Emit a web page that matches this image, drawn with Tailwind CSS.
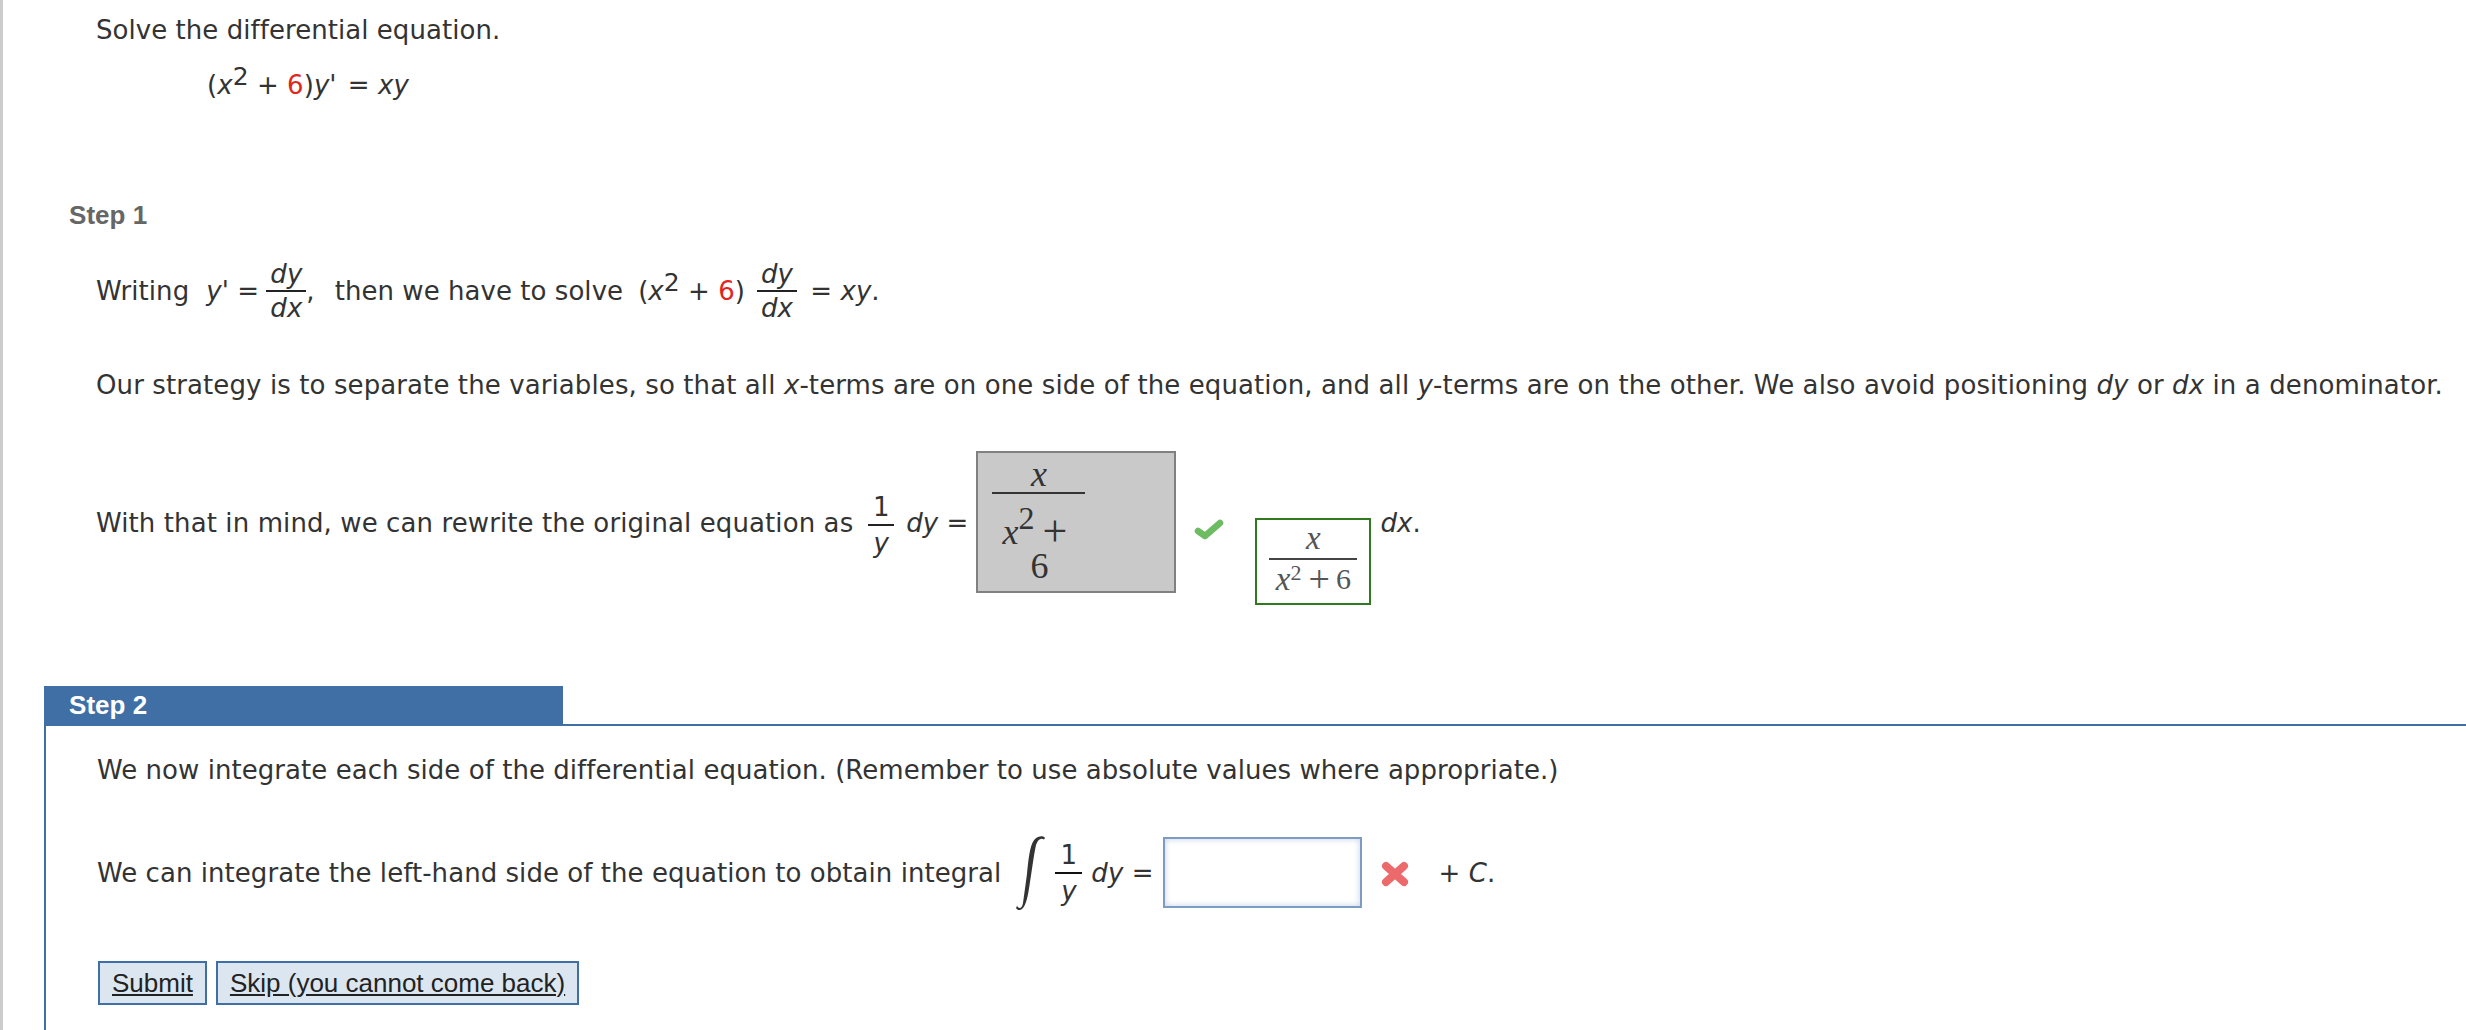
<!DOCTYPE html>
<html><head><meta charset="utf-8"><title>Step</title>
<script src="https://cdn.jsdelivr.net/npm/@tailwindcss/browser@4"></script></head>
<body class="bg-white">
<div class="w-[2466px] h-[1030px] overflow-hidden flex text-[#333] text-[26px] tracking-[0.05px] font-['DejaVu_Sans',sans-serif]">
  <div class="w-[3px] bg-[#cccccc] shrink-0"></div>
  <div class="flex-1 flex flex-col min-w-0 whitespace-nowrap">
    <div class="h-[60px] flex items-center pl-[93px]">Solve the differential equation.</div>
    <div class="h-[50px] flex items-center pl-[204px]"><span>(<i>x</i><sup class="text-[25px] relative top-[-9px] align-baseline">2</sup>&nbsp;+&nbsp;<span class="text-[#e1261c]">6</span>)<i>y'</i><span class="ml-[3px]">&nbsp;=&nbsp;</span><i>xy</i></span></div>
    <div class="h-[40px] mt-[85px] flex items-center pl-[66px] font-bold text-[#666] font-['Liberation_Sans',sans-serif]">Step 1</div>
    <div class="h-[76px] mt-[18px] flex items-center pl-[93px]">
      <span>Writing</span><span class="ml-[17px]"><i>y'</i>&nbsp;=&nbsp;</span>
      <span class="inline-flex flex-col items-center w-[40px] ml-[-1px]"><i class="leading-[32px]">dy</i><span class="w-full h-[2px] bg-[#222]"></span><i class="leading-[32px]">dx</i></span>
      <span><span class="inline-block">,</span><span class="ml-[20px]">then we have to solve</span><span class="ml-[15px]">(<i>x</i><sup class="text-[25px] relative top-[-9px] align-baseline">2</sup>&nbsp;+&nbsp;<span class="text-[#e1261c]">6</span>)</span></span>
      <span class="inline-flex flex-col items-center w-[40px] ml-[12px]"><i class="leading-[32px]">dy</i><span class="w-full h-[2px] bg-[#222]"></span><i class="leading-[32px]">dx</i></span>
      <span class="ml-[5px]">&nbsp;=&nbsp;<i>xy</i>.</span>
    </div>
    <div class="h-[40px] mt-[36px] flex items-center pl-[93px] tracking-[0.1px]"><span>Our strategy is to separate the variables, so that all <i>x</i>-terms are on one side of the equation, and all <i>y</i>-terms are on the other. We also avoid positioning <i>dy</i> or <i>dx</i> in a denominator.</span></div>
    <div class="h-[154px] mt-[46px] flex items-start pl-[93px]">
      <span class="mt-[53px] tracking-[0.1px]">With that in mind, we can rewrite the original equation as</span>
      <span class="inline-flex flex-col items-center w-[26px] mt-[39px] ml-[15px]"><span class="leading-[34px]">1</span><span class="w-full h-[2px] bg-[#222]"></span><i class="leading-[34px]">y</i></span>
      <span class="mt-[53px] ml-[12px]"><i>dy</i>&nbsp;=</span>
      <div class="w-[200px] h-[142px] ml-[8px] border-2 border-[#808080] bg-[#c9c9c9] font-['Liberation_Serif',serif] text-[36px] flex flex-col pl-[14px] pt-[3px] text-[#333]">
        <div class="w-[93px] flex flex-col items-center"><i class="leading-[36px]">x</i><span class="w-full h-[2px] bg-[#333]"></span></div>
        <div class="leading-[40px] h-[40px] pl-[10px] mt-[18px] flex items-start"><i>x</i><span class="text-[32px] leading-[32px] -mt-[10px]">2</span><span class="ml-[8px] text-[44px] leading-[40px]">+</span></div>
        <div class="leading-[40px] h-[36px] pl-[38px] mt-[-6px]">6</div>
      </div>
      <svg class="mt-[57px] ml-[12px]" width="45" height="45" viewBox="0 0 45 45"><path d="M10 23 L17 28 L32 15" fill="none" stroke="#6dbb62" stroke-width="6.500" stroke-linecap="round" stroke-linejoin="round" class="blur-[0.6px]"/></svg>
      <div class="w-[116px] h-[87px] ml-[22px] mt-[67px] border-2 border-[#2f7a1f] font-['Liberation_Serif',serif] text-[30px] text-[#555] flex flex-col items-center pt-[1px]">
        <i class="leading-[32px] mt-[1px] text-[33px]">x</i><span class="w-[88px] h-[2px] mt-[4px] bg-[#444]"></span>
        <span class="leading-[38px] flex items-start"><i class="text-[33px]">x</i><span class="text-[22px] leading-[22px] mt-[2px]">2</span><span class="ml-[7px] text-[38px]">+</span><span class="ml-[6px]">6</span></span>
      </div>
      <span class="mt-[53px] ml-[9px]"><i>dx</i>.</span>
    </div>
    <div class="mt-[81px] ml-[41px] flex-1 flex flex-col border-l-2 border-[#406fa6]">
      <div class="flex items-end h-[40px] -ml-[2px]">
        <div class="w-[519px] h-[40px] pb-[2px] bg-[#406fa6] text-white font-bold font-['Liberation_Sans',sans-serif] flex items-center pl-[25px]">Step 2</div>
        <div class="flex-1 h-[2px] bg-[#406fa6]"></div>
      </div>
      <div class="h-[40px] mt-[24px] flex items-center pl-[51px]">We now integrate each side of the differential equation. (Remember to use absolute values where appropriate.)</div>
      <div class="h-[78px] mt-[44px] flex items-center pl-[51px]">
        <span>We can integrate the left-hand side of the equation to obtain integral</span>
        <svg class="ml-[14px]" width="32" height="78" viewBox="0 0 32 78"><path d="M2 72 C4 75 7 75 8 69 L12 40 C14 22 15 6 23 3 C26 1.500 29 2 30 4 L29 5.500 C26 3.500 23 5 21 11 C19 20 17 35 15 48 C13 62 11 72 7 75 C5 77 2 76 1 74 Z" fill="#333"/></svg>
        <span class="inline-flex flex-col items-center w-[27px] ml-[8px]"><span class="leading-[34px]">1</span><span class="w-full h-[2px] bg-[#111]"></span><i class="leading-[34px]">y</i></span>
        <span class="ml-[9px]"><i>dy</i>&nbsp;=</span>
        <div class="w-[199px] h-[71px] ml-[9px] -mt-[2px] border-2 border-[#7c9cc5] bg-white shadow-[inset_0_0_6px_rgba(124,156,197,0.45)]"></div>
        <svg class="ml-[13px]" width="40" height="45" viewBox="0 0 40 45"><path d="M11 15 L29 31 M29 15 L11 31" fill="none" stroke="#ec6a6c" stroke-width="8" stroke-linecap="round" class="blur-[0.7px]"/></svg>
        <span class="ml-[24px]">+ <i>C</i>.</span>
      </div>
      <div class="flex gap-[9px] mt-[49px] pl-[52px] tracking-normal font-['Liberation_Sans',sans-serif] text-[#222]">
        <a class="h-[44px] px-[12px] border-2 border-[#406fa6] bg-[#dce6f0] flex items-center underline">Submit</a>
        <a class="h-[44px] px-[12px] border-2 border-[#406fa6] bg-[#dce6f0] flex items-center underline">Skip (you cannot come back)</a>
      </div>
    </div>
  </div>
</div>
</body></html>
